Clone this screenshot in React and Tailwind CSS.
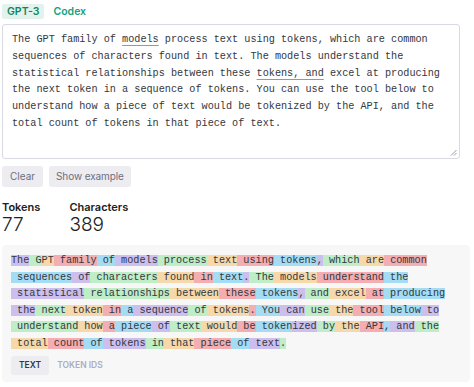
import React from 'react';

const COLORS = [
  'bg-[rgba(107,64,216,0.3)]',
  'bg-[rgba(104,222,122,0.4)]',
  'bg-[rgba(244,172,54,0.4)]',
  'bg-[rgba(239,65,70,0.4)]',
  'bg-[rgba(39,181,234,0.4)]',
];

const lines = [
  ['The', ' G', 'PT', ' family', ' of', ' models', ' process', ' text', ' using', ' tokens', ',', ' which', ' are', ' common'],
  [' sequences', ' of', ' characters', ' found', ' in', ' text', '.', ' The', ' models', ' understand', ' the'],
  [' statistical', ' relationships', ' between', ' these', ' tokens', ',', ' and', ' excel', ' at', ' producing'],
  [' the', ' next', ' token', ' in', ' a', ' sequence', ' of', ' tokens', '.', ' You', ' can', ' use', ' the', ' tool', ' below', ' to'],
  [' understand', ' how', ' a', ' piece', ' of', ' text', ' would', ' be', ' token', 'ized', ' by', ' the', ' API', ',', ' and', ' the'],
  [' total', ' count', ' of', ' tokens', ' in', ' that', ' piece', ' of', ' text', '.'],
];

const mono = "font-['Liberation_Mono','DejaVu_Sans_Mono',monospace]";

const Underlined = ({ children }) => (
  <span className="underline decoration-[#8e8ee6] decoration-1 underline-offset-[3px]">{children}</span>
);

const App = () => {
  let n = 0;

  return (
    <div className="w-[474px] h-[387px] bg-white pl-[2px] pt-[4px] font-['Inter',sans-serif] text-[#353740]">
      <div className="flex items-center gap-[4px] h-[15px]">
        <div className="h-[15px] px-[5px] flex items-center rounded-[2px] bg-[#e3f2ec] text-[#10875f] text-[10.5px] font-semibold">GPT-3</div>
        <div className="px-[5px] text-[#10a37f] text-[10.5px] font-semibold">Codex</div>
      </div>

      <div className={`relative mt-[5px] w-[458px] h-[135px] border border-[#d9d9e3] rounded-[3px] pl-[9px] pt-[7px] text-[10.2px] leading-[16.8px] text-[#353740] ${mono}`}>
        <div>The GPT family of <Underlined>models</Underlined> process text using tokens, which are common</div>
        <div>sequences of characters found in text. The models understand the</div>
        <div>statistical relationships between these <Underlined>tokens, and</Underlined> excel at producing</div>
        <div>the next token in a sequence of tokens. You can use the tool below to</div>
        <div>understand how a piece of text would be tokenized by the API, and the</div>
        <div>total count of tokens in that piece of text.</div>
        <svg className="absolute right-[2px] bottom-[2px]" width="7" height="7" viewBox="0 0 7 7">
          <path d="M1 6.5 L6.5 1 M4 6.5 L6.5 4" stroke="#8e8ea0" strokeWidth="0.9" />
        </svg>
      </div>

      <div className="flex gap-[6px] mt-[7px]">
        <button className="h-[21px] px-[8px] rounded-[3px] bg-[#ececf1] text-[#6e6e80] text-[10px]">Clear</button>
        <button className="h-[21px] px-[7px] rounded-[3px] bg-[#ececf1] text-[#6e6e80] text-[10px] tracking-[-0.1px]">Show example</button>
      </div>

      <div className="flex gap-[29px] mt-[13px]">
        <div>
          <div className="text-[11px] font-semibold leading-[14px] text-[#202123]">Tokens</div>
          <div className="text-[19px] leading-[22px] font-light text-[#202123]">77</div>
        </div>
        <div>
          <div className="text-[11px] font-semibold leading-[14px] text-[#202123]">Characters</div>
          <div className="text-[19px] leading-[22px] font-light text-[#202123]">389</div>
        </div>
      </div>

      <div className="mt-[9px] w-[468px] h-[137px] rounded-[4px] bg-[#f7f7f8] pl-[9px] pt-[8px]">
        <div className={`text-[10.2px] leading-[16.5px] text-[#353740] whitespace-pre ${mono}`}>
          {lines.map((line, i) => (
            <div key={i}>
              {line.map((tok, j) => {
                const c = COLORS[n % 5];
                n += 1;
                return (
                  <span key={j} className={c}>{tok}</span>
                );
              })}
            </div>
          ))}
        </div>
        <div className="flex gap-[8px] mt-[4px] text-[8.5px] font-semibold uppercase">
          <div className="h-[19px] px-[8px] flex items-center rounded-[3px] bg-[#ececf1] text-[#353740]">Text</div>
          <div className="h-[19px] flex items-center text-[#acacbe]">Token IDs</div>
        </div>
      </div>
    </div>
  );
};

export default App;
